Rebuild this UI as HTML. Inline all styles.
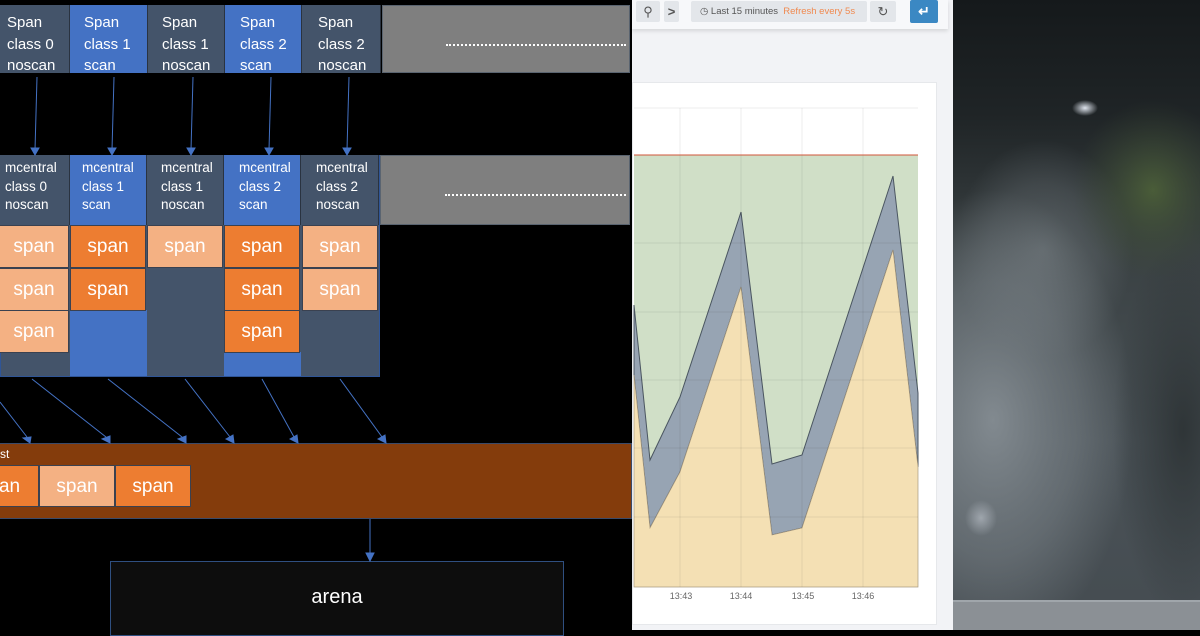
<!DOCTYPE html>
<html><head><meta charset="utf-8"><style>
*{margin:0;padding:0;box-sizing:border-box}
body{width:1200px;height:630px;overflow:hidden;background:#000;position:relative;font-family:"Liberation Sans",sans-serif}
.a{position:absolute}
.t{color:#fff;font-size:15px;line-height:21.5px;padding:7px 0 0 7px;border-right:1px solid #2a3340}
.m{color:#fff;font-size:13.5px;line-height:18.5px;padding:4px 0 0 5px;border-right:1px solid #2a3340}
.d{background:#44546a}.b{background:#4472c4}
.s{color:#fff;font-size:19px;text-align:center;line-height:41px;border:1px solid #3a4150}
.lo{background:#f4b183}.o{background:#ed7d31}
</style></head><body>
<div class="a t d" style="left:0;top:5px;width:70px;height:68px">Span<br>class 0<br>noscan</div>
<div class="a t b" style="left:70px;top:5px;width:78px;height:68px;padding-left:14px">Span<br>class 1<br>scan</div>
<div class="a t d" style="left:148px;top:5px;width:77px;height:68px;padding-left:14px">Span<br>class 1<br>noscan</div>
<div class="a t b" style="left:225px;top:5px;width:77px;height:68px;padding-left:15px">Span<br>class 2<br>scan</div>
<div class="a t d" style="left:302px;top:5px;width:79px;height:68px;padding-left:16px">Span<br>class 2<br>noscan</div>
<div class="a" style="left:382px;top:5px;width:248px;height:68px;background:#7f7f7f;border:1px solid #5a6470"></div>
<div class="a" style="left:446px;top:44px;width:180px;border-top:2px dotted #fff"></div>
<div class="a" style="left:0;top:155px;width:380px;height:222px;background:#44546a;border:1px solid #2f5597"></div>
<div class="a m d" style="left:0;top:155px;width:70px;height:70px">mcentral<br>class 0<br>noscan</div>
<div class="a m b" style="left:70px;top:155px;width:77px;height:70px;padding-left:12px">mcentral<br>class 1<br>scan</div>
<div class="a m d" style="left:147px;top:155px;width:77px;height:70px;padding-left:14px">mcentral<br>class 1<br>noscan</div>
<div class="a m b" style="left:224px;top:155px;width:77px;height:70px;padding-left:15px">mcentral<br>class 2<br>scan</div>
<div class="a m d" style="left:301px;top:155px;width:78px;height:70px;padding-left:15px">mcentral<br>class 2<br>noscan</div>
<div class="a" style="left:380px;top:155px;width:250px;height:70px;background:#7f7f7f;border:1px solid #5a6470"></div>
<div class="a" style="left:445px;top:194px;width:181px;border-top:2px dotted #fff"></div>
<div class="a b" style="left:70px;top:310px;width:77px;height:66px"></div>
<div class="a b" style="left:224px;top:352px;width:77px;height:24px"></div>
<div class="a s lo" style="left:-1px;top:225px;width:70px;height:43px">span</div>
<div class="a s lo" style="left:-1px;top:268px;width:70px;height:43px">span</div>
<div class="a s lo" style="left:-1px;top:310px;width:70px;height:43px">span</div>
<div class="a s o" style="left:70px;top:225px;width:76px;height:43px">span</div>
<div class="a s o" style="left:70px;top:268px;width:76px;height:43px">span</div>
<div class="a s lo" style="left:147px;top:225px;width:76px;height:43px">span</div>
<div class="a s o" style="left:224px;top:225px;width:76px;height:43px">span</div>
<div class="a s o" style="left:224px;top:268px;width:76px;height:43px">span</div>
<div class="a s o" style="left:224px;top:310px;width:76px;height:43px">span</div>
<div class="a s lo" style="left:302px;top:225px;width:76px;height:43px">span</div>
<div class="a s lo" style="left:302px;top:268px;width:76px;height:43px">span</div>
<div class="a" style="left:-2px;top:443px;width:634px;height:76px;background:#843c0c;border:1px solid #3a4a6a"></div>
<div class="a" style="left:0;top:447px;color:#fff;font-size:12px">st</div>
<div class="a s o" style="left:-40px;top:465px;width:79px;height:42px">span</div>
<div class="a s lo" style="left:39px;top:465px;width:76px;height:42px">span</div>
<div class="a s o" style="left:115px;top:465px;width:76px;height:42px">span</div>
<div class="a" style="left:110px;top:561px;width:454px;height:75px;background:#0d0d0d;border:1px solid #2f4f80;color:#fff;font-size:20px;text-align:center;line-height:70px">arena</div>
<svg class="a" style="left:0;top:0" width="632" height="630">
<g stroke="#4472c4" stroke-width="1" fill="#4472c4">
<line x1="37" y1="77" x2="35" y2="150"/><polygon points="31,148 39,148 35,155"/>
<line x1="114" y1="77" x2="112" y2="150"/><polygon points="108,148 116,148 112,155"/>
<line x1="193" y1="77" x2="191" y2="150"/><polygon points="187,148 195,148 191,155"/>
<line x1="271" y1="77" x2="269" y2="150"/><polygon points="265,148 273,148 269,155"/>
<line x1="349" y1="77" x2="347" y2="150"/><polygon points="343,148 351,148 347,155"/>
<line x1="0" y1="402" x2="27" y2="437"/><polygon points="23,438 31,437 30,443"/>
<line x1="32" y1="379" x2="106" y2="437"/><polygon points="102,439 110,436 110,443"/>
<line x1="108" y1="379" x2="182" y2="437"/><polygon points="178,439 186,436 186,443"/>
<line x1="185" y1="379" x2="230" y2="437"/><polygon points="226,439 233,435 234,443"/>
<line x1="262" y1="379" x2="294" y2="437"/><polygon points="290,439 297,435 298,443"/>
<line x1="340" y1="379" x2="382" y2="437"/><polygon points="378,439 385,435 386,443"/>
<line x1="370" y1="519" x2="370" y2="555"/><polygon points="366,553 374,553 370,561"/>
</g></svg>
<div class="a" style="left:632px;top:0;width:321px;height:630px;background:#f2f3f6"></div>
<div class="a" style="left:632px;top:0;width:316px;height:29px;background:#f7f8fa;box-shadow:0 2px 4px rgba(0,0,0,.12)"></div>
<div class="a" style="left:636px;top:1px;width:24px;height:21px;background:#e3e6ea;border-radius:2px;color:#555;font-size:13px;text-align:center;line-height:21px">&#9906;</div>
<div class="a" style="left:664px;top:1px;width:15px;height:21px;background:#e3e6ea;border-radius:2px;color:#555;font-size:13px;text-align:center;line-height:21px;font-weight:bold">&gt;</div>
<div class="a" style="left:691px;top:1px;width:176px;height:21px;background:#e3e6ea;border-radius:2px;font-size:9.5px;line-height:21px;padding-left:9px;color:#555;white-space:nowrap">&#9719; Last 15 minutes &nbsp;<span style="color:#f08a50">Refresh every 5s</span></div>
<div class="a" style="left:870px;top:1px;width:26px;height:21px;background:#e3e6ea;border-radius:2px;color:#555;font-size:13px;text-align:center;line-height:21px">&#8635;</div>
<div class="a" style="left:910px;top:0;width:28px;height:23px;background:#3b88c3;border-radius:2px;color:#fff;font-size:14px;text-align:center;line-height:22px;font-weight:bold">&#8629;</div>
<div class="a" style="left:632px;top:82px;width:305px;height:543px;background:#fff;border:1px solid #e6e8eb"></div>
<svg class="a" style="left:632px;top:0" width="321" height="630">
<g transform="translate(-632,0)">
<polygon points="634,155 918,155 918,587 634,587" fill="#d0dfc7"/>
<polygon points="634,305 650,460 680,397 741,212 772,464 802,455 893,176 918,393 918,467 893,250 802,528 772,535 741,287 680,472 650,528 634,375" fill="#97a4b3" stroke="#4a5560" stroke-width="1"/>
<polygon points="634,375 650,528 680,472 741,287 772,535 802,528 893,250 918,467 918,587 634,587" fill="#f4e0b4" stroke="#a89a80" stroke-width="0.7"/>
<g stroke="#000" stroke-opacity=".07">
<line x1="680" y1="108" x2="680" y2="587"/><line x1="741" y1="108" x2="741" y2="587"/><line x1="802" y1="108" x2="802" y2="587"/><line x1="863" y1="108" x2="863" y2="587"/>
<line x1="634" y1="108" x2="918" y2="108"/><line x1="634" y1="243" x2="918" y2="243"/><line x1="634" y1="312" x2="918" y2="312"/><line x1="634" y1="380" x2="918" y2="380"/><line x1="634" y1="448" x2="918" y2="448"/><line x1="634" y1="517" x2="918" y2="517"/>
</g>
<line x1="634" y1="155" x2="918" y2="155" stroke="#d0553a" stroke-width="1"/>
<g font-size="9" fill="#666" text-anchor="middle" font-family="Liberation Sans">
<text x="681" y="599">13:43</text><text x="741" y="599">13:44</text><text x="803" y="599">13:45</text><text x="863" y="599">13:46</text></g>
</g></svg>
<svg class="a" style="left:953px;top:0" width="247" height="630">
<defs>
<linearGradient id="g1" x1="0" y1="0" x2="0" y2="1"><stop offset="0" stop-color="#15191b"/><stop offset=".18" stop-color="#1f2426"/><stop offset=".4" stop-color="#3a4143"/><stop offset=".7" stop-color="#4a5257"/><stop offset="1" stop-color="#454c51"/></linearGradient>
<radialGradient id="m1" cx=".5" cy=".5" r=".5"><stop offset="0" stop-color="#8c949a" stop-opacity=".85"/><stop offset=".6" stop-color="#7d858b" stop-opacity=".5"/><stop offset="1" stop-color="#7d858b" stop-opacity="0"/></radialGradient>
<radialGradient id="gr" cx=".5" cy=".5" r=".5"><stop offset="0" stop-color="#4d6139" stop-opacity=".9"/><stop offset="1" stop-color="#3c4a36" stop-opacity="0"/></radialGradient>
<radialGradient id="dk" cx=".5" cy=".5" r=".5"><stop offset="0" stop-color="#2c3234" stop-opacity=".9"/><stop offset="1" stop-color="#2c3234" stop-opacity="0"/></radialGradient>
<radialGradient id="lt" cx=".5" cy=".5" r=".5"><stop offset="0" stop-color="#dfe5ee"/><stop offset="1" stop-color="#dfe5ee" stop-opacity="0"/></radialGradient>
</defs>
<rect width="247" height="630" fill="url(#g1)"/>
<ellipse cx="40" cy="420" rx="140" ry="230" fill="url(#m1)"/>
<ellipse cx="90" cy="250" rx="90" ry="110" fill="url(#m1)" opacity=".5"/>
<ellipse cx="200" cy="190" rx="80" ry="90" fill="url(#gr)"/>
<ellipse cx="230" cy="430" rx="70" ry="190" fill="url(#dk)"/>
<ellipse cx="132" cy="108" rx="13" ry="8" fill="url(#lt)"/>
<ellipse cx="28" cy="518" rx="16" ry="18" fill="url(#lt)" opacity=".45"/>
<rect y="600" width="247" height="30" fill="#8b9095"/>
<rect y="600" width="247" height="2" fill="#a0a6ab"/>
</svg>
</body></html>
